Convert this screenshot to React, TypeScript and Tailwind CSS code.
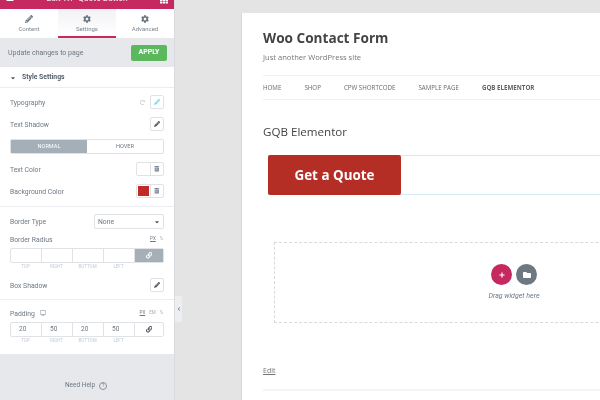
import React from 'react';
import { FaPencilAlt, FaCog, FaTrashAlt, FaLink, FaFolder, FaPlus, FaDesktop, FaCaretDown, FaChevronLeft, FaTh, FaBars, FaRedoAlt } from 'react-icons/fa';

const Tab = ({ label, icon, active }: { label: string; icon: React.ReactNode; active?: boolean }) => (
  <div className={`flex-1 flex flex-col items-center pt-[6px] h-[29px] border-b-2 ${active ? 'bg-gradient-to-b from-[#f1f2f4] to-white border-[#c9285f]' : 'border-transparent'}`}>
    <span className="text-[8px] h-[9px] text-[#6d7882]">{icon}</span>
    <span className="text-[6px] leading-[8px] mt-[1px] text-[#7d8790]">{label}</span>
  </div>
);

const IconButton = ({ blue }: { blue?: boolean }) => (
  <div className={`w-[14px] h-[14px] border border-[#e0e2e5] rounded-[2px] flex items-center justify-center text-[6px] ${blue ? 'text-[#71d7f7]' : 'text-[#495157]'}`}>
    <FaPencilAlt />
  </div>
);

const Row = ({ label, children, className }: { label: string; children?: React.ReactNode; className?: string }) => (
  <div className={`flex items-center justify-between px-[10px] text-[6.8px] text-[#6d7882] ${className ?? ''}`}>
    <span className="pt-[2px]">{label}</span>
    {children}
  </div>
);

const ColorControl = ({ color }: { color?: string }) => (
  <div className="flex w-[28px] h-[14px] border border-[#e0e2e5] rounded-[2px]">
    <div className="w-[14px] border-r border-[#e0e2e5] p-[1px]">
      {color && <div className="w-full h-full bg-[#bf2b26]" />}
    </div>
    <div className="flex-1 flex items-center justify-center text-[5.5px] text-[#6d7882]">
      <FaTrashAlt />
    </div>
  </div>
);

const Dimensions = ({ values, active }: { values: string[]; active?: boolean }) => (
  <div className="mx-[10px]">
    <div className="flex h-[15px] border border-[#e0e2e5] rounded-[2px] text-[6.5px] text-[#6d7882]">
      {values.map((v, i) => (
        <div key={i} className="w-[31px] border-r border-[#e0e2e5] flex items-center pl-[8px]">{v}</div>
      ))}
      <div className={`flex-1 flex items-center justify-center text-[6.5px] ${active ? 'bg-[#a4afb7] text-white' : 'text-[#495157]'}`}>
        <FaLink />
      </div>
    </div>
    <div className="flex text-[4.5px] leading-[6px] mt-[1px] text-[#c2cbd2]">
      {['TOP', 'RIGHT', 'BOTTOM', 'LEFT'].map(l => (
        <span key={l} className="w-[31px] text-center">{l}</span>
      ))}
    </div>
  </div>
);

const Units = ({ items }: { items: string[] }) => (
  <div className="flex items-center gap-[4px] text-[4.5px] text-[#a4afb7] pr-[1px]">
    {items.map((u, i) => (
      <span key={u} className={i === 0 ? 'underline text-[#6d7882]' : ''}>{u}</span>
    ))}
  </div>
);

export default function App() {
  return (
    <div className="flex w-[600px] h-[400px] overflow-hidden bg-[#e4e4e4] font-['Roboto',sans-serif] blur-[0.35px]">
      {/* editor panel */}
      <div className="relative w-[175px] h-full shrink-0 bg-[#e6e8ec] border-r border-[#d9dbdf]">
        <div className="h-[9px] bg-[#c6295f] flex items-start justify-between px-[6px] text-white overflow-hidden">
          <FaBars className="text-[8px] -mt-[6px]" />
          <span className="text-[8.5px] leading-[8px] -mt-[6px] opacity-90">Edit WP-Quote Button</span>
          <FaTh className="text-[8px] -mt-[4px]" />
        </div>
        <div className="flex bg-white">
          <Tab label="Content" icon={<FaPencilAlt />} />
          <Tab label="Settings" icon={<FaCog />} active />
          <Tab label="Advanced" icon={<FaCog />} />
        </div>
        <div className="h-[29px] flex items-center justify-between pl-[8px] pr-[7px] text-[7px] text-[#6d7882]">
          <span className="pt-[2px]">Update changes to page</span>
          <div className="w-[36px] h-[16px] rounded-[2px] bg-[#5cb85c] text-white font-bold flex items-center justify-center text-[7px]">APPLY</div>
        </div>
        <div className="bg-white h-[287px]">
          <div className="h-[21px] pt-[1px] flex items-center gap-[6px] pl-[10px] border-b border-[#eceef1] text-[6.8px] font-bold text-[#556068]">
            <FaCaretDown className="text-[6px] text-[#495157]" />
            <span>Style Settings</span>
          </div>
          <Row label="Typography" className="h-[14px] mt-[7px]">
            <div className="flex items-center gap-[5px]">
              <FaRedoAlt className="text-[5px] text-[#c2cbd2]" />
              <IconButton blue />
            </div>
          </Row>
          <Row label="Text Shadow" className="h-[14px] mt-[8px]">
            <IconButton />
          </Row>
          <div className="flex mx-[10px] mt-[8px] h-[15px] border border-[#e0e2e5] rounded-[2px] text-[5.6px]">
            <div className="w-1/2 bg-[#a4afb7] text-white flex items-center justify-center">NORMAL</div>
            <div className="w-1/2 text-[#6d7882] flex items-center justify-center">HOVER</div>
          </div>
          <Row label="Text Color" className="h-[14px] mt-[8px]">
            <ColorControl />
          </Row>
          <Row label="Background Color" className="h-[14px] mt-[8px]">
            <ColorControl color="red" />
          </Row>
          <div className="h-[1px] bg-[#eceef1] mt-[8px]" />
          <Row label="Border Type" className="h-[15px] mt-[7px]">
            <div className="w-[70px] h-[15px] border border-[#e0e2e5] rounded-[2px] flex items-center justify-between px-[3px]">
              <span className="pt-[1px]">None</span>
              <FaCaretDown className="text-[6px] text-[#495157]" />
            </div>
          </Row>
          <Row label="Border Radius" className="h-[8px] mt-[6px]">
            <Units items={['PX', '%']} />
          </Row>
          <div className="mt-[5px]">
            <Dimensions values={['', '', '', '']} active />
          </div>
          <Row label="Box Shadow" className="h-[14px] mt-[8px]">
            <IconButton />
          </Row>
          <div className="h-[1px] bg-[#eceef1] mt-[7px]" />
          <Row label="Padding" className="h-[8px] mt-[9px]">
            <Units items={['PX', 'EM', '%']} />
          </Row>
          <div className="mt-[5px]">
            <Dimensions values={['20', '50', '20', '50']} />
          </div>
        </div>
        <div className="flex items-center justify-center gap-[4px] mt-[27px] pr-[2px] text-[6.5px] text-[#6d7882]">
          <span>Need Help</span>
          <span className="w-[8px] h-[8px] rounded-full border border-[#8a949c] text-[5px] flex items-center justify-center">?</span>
        </div>
        <FaDesktop className="absolute left-[40px] top-[310px] text-[6px] text-[#a4afb7]" />
        <div className="absolute left-[175px] top-[296px] w-[7px] h-[26px] bg-[#edeef0] rounded-r-[2px] flex items-center justify-center text-[4px] text-[#6d7882]">
          <FaChevronLeft />
        </div>
      </div>

      {/* preview page */}
      <div className="flex-1 pt-[13px] pl-[66px]">
        <div className="h-full bg-white pl-[21px] pt-[16px] border-l border-[#d8d8d8] font-['Open_Sans',sans-serif]">
          <h1 className="text-[13.6px] leading-[18px] font-bold text-[#444444]">Woo Contact Form</h1>
          <p className="text-[7.6px] leading-[10px] mt-[5px] text-[#757575]">Just another WordPress site</p>
          <nav className="flex gap-[23px] h-[25px] mt-[13px] items-center border-y border-[#f0f0f0] text-[6.2px] text-[#6a6a6a]">
            <span>HOME</span>
            <span>SHOP</span>
            <span>CPW SHORTCODE</span>
            <span>SAMPLE PAGE</span>
            <span className="font-bold text-[#636363]">GQB ELEMENTOR</span>
          </nav>
          <h2 className="text-[11.6px] leading-[18px] mt-[23px] text-[#444444]">GQB Elementor</h2>
          <div className="flex ml-[5px] mt-[14px] h-[40px] border-y border-r-0 border-[#d5e8f5]">
            <div className="w-[133px] -my-[1px] pt-[1px] rounded-[2px] bg-[#b52e25] text-white text-[13.4px] font-bold flex items-center justify-center">Get a Quote</div>
          </div>
          <div className="ml-[11px] mt-[47px] h-[81px] border border-dashed border-[#d5dadf] flex flex-col items-center pt-[21px] w-[480px]">
            <div className="flex gap-[4px]">
              <div className="w-[21px] h-[21px] rounded-full bg-[#c6295f] text-white text-[6px] flex items-center justify-center"><FaPlus /></div>
              <div className="w-[21px] h-[21px] rounded-full bg-[#6d7882] text-white text-[8px] flex items-center justify-center"><FaFolder /></div>
            </div>
            <span className="text-[7px] leading-[9px] mt-[7px] italic text-[#6d7882] font-['Roboto',sans-serif]">Drag widget here</span>
          </div>
          <a className="block text-[7px] leading-[10px] mt-[43px] text-[#757575] underline">Edit</a>
          <div className="h-[2px] bg-[#f5f5f5] mt-[13px]" />
        </div>
      </div>
    </div>
  );
}
